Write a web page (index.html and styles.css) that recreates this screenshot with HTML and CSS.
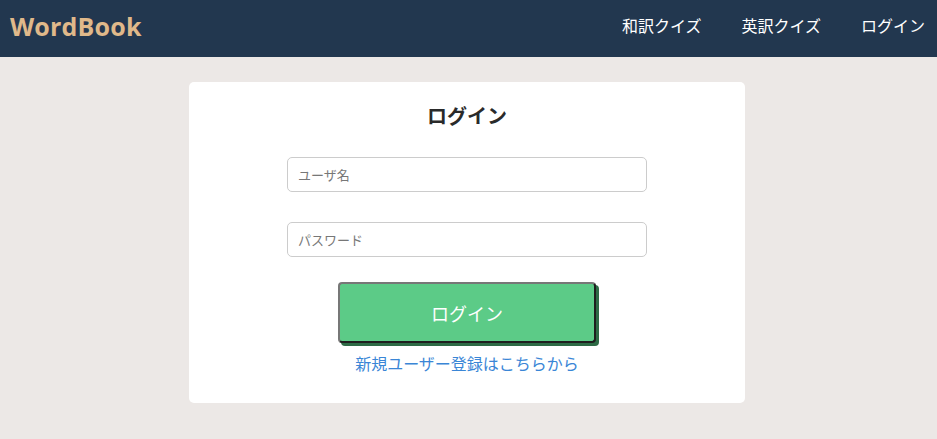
FILE: index.html
```html
<!DOCTYPE html>
<html lang="ja">
<head>
<meta charset="utf-8">
<title>WordBook - ログイン</title>
<link rel="stylesheet" href="styles.css">
</head>
<body>
<header class="header">
  <a class="logo" href="#">WordBook</a>
  <nav class="nav">
    <a class="nav-link" href="#">和訳クイズ</a>
    <a class="nav-link" href="#">英訳クイズ</a>
    <a class="nav-link" href="#">ログイン</a>
  </nav>
</header>
<main class="main">
  <section class="card">
    <h2 class="card-title">ログイン</h2>
    <form class="form">
      <input class="field" type="text" placeholder="ユーザ名">
      <input class="field" type="password" placeholder="パスワード">
      <button class="btn" type="button">ログイン</button>
    </form>
    <a class="signup" href="#">新規ユーザー登録はこちらから</a>
  </section>
</main>
</body>
</html>
```
FILE: styles.css
```css
* { box-sizing: border-box; }
body {
  margin: 0;
  background: #ece8e6;
  font-family: "Open Sans", "Noto Sans CJK JP", sans-serif;
}
.header {
  height: 57px;
  background: #22374f;
  display: flex;
  align-items: center;
  justify-content: space-between;
  padding: 0 12px 0 10px;
}
.logo {
  color: #e0b98a;
  font-weight: 700;
  font-size: 25px;
  text-decoration: none;
  letter-spacing: 0.2px;
  margin-top: -6px;
}
.nav {
  display: flex;
  gap: 40px;
  margin-top: -7px;
}
.nav-link {
  color: #ffffff;
  font-family: "Noto Sans CJK JP", sans-serif;
  font-size: 16px;
  text-decoration: none;
}
.main {
  padding: 25px 3px 0 0;
}
.card {
  width: 556px;
  margin: 0 auto;
  background: #ffffff;
  border-radius: 5px;
  padding: 20px 0 29px;
  display: flex;
  flex-direction: column;
  align-items: center;
  font-family: "Noto Sans CJK JP", sans-serif;
}
.card-title {
  margin: 0;
  font-size: 20px;
  line-height: 28px;
  font-weight: 700;
  color: #2a2a2a;
}
.form {
  display: flex;
  flex-direction: column;
  align-items: center;
  margin-top: 27px;
}
.field {
  width: 360px;
  height: 35px;
  border: 1px solid #cccccc;
  border-radius: 5px;
  padding: 0 10px;
  font-family: "Noto Sans CJK JP", sans-serif;
  font-size: 13px;
  color: #333;
  outline: none;
}
.field + .field { margin-top: 30px; }
.field::placeholder { color: #777777; }
.btn {
  margin-top: 25px;
  width: 258px;
  height: 61px;
  background: #5ccb87;
  border: 2px solid;
  border-color: #777777 #1e1e1e #1e1e1e #777777;
  border-radius: 4px;
  box-shadow: 3px 3px 0 #2d6a45;
  color: #ffffff;
  font-family: "Noto Sans CJK JP", sans-serif;
  font-size: 18px;
}
.signup {
  margin-top: 9px;
  color: #3a86d6;
  font-size: 16px;
  line-height: 22px;
  text-decoration: none;
}
```
